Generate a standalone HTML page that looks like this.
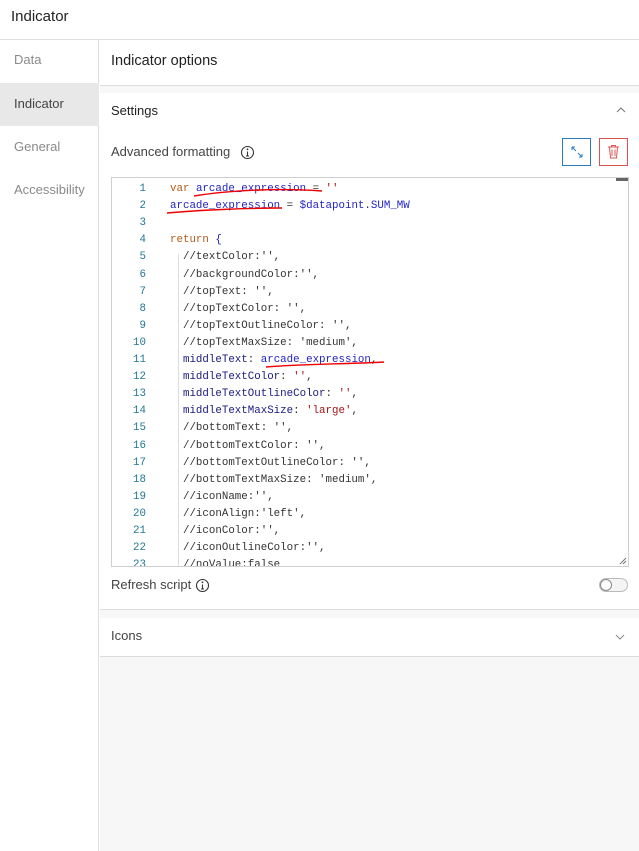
<!DOCTYPE html>
<html><head><meta charset="utf-8"><style>
*{box-sizing:border-box;margin:0;padding:0}
body{width:639px;height:851px;overflow:hidden;background:#fff;font-family:"Liberation Sans",sans-serif;color:#323232;position:relative}
.a{position:absolute}
.t{font-size:14px}
.code{position:absolute;left:111px;top:177px;width:518px;height:390px;border:1px solid #cfcfcf;background:#fff;overflow:hidden}
.ln{position:absolute;left:0;width:34px;text-align:right;color:#237893;font:10.8px "Liberation Mono",monospace}
.cl{position:absolute;left:58px;white-space:pre;font:10.8px "Liberation Mono",monospace;color:#333}
.k{color:#af5a1b}.v{color:#1f1fc4}.p{color:#1a1a80}.s{color:#a31515}
</style></head><body>
<div class="a t" style="left:11px;top:8px;font-size:15px;color:#222">Indicator</div>
<div class="a" style="left:0;top:39px;width:639px;height:1px;background:#ddd"></div>
<div class="a" style="left:0;top:40px;width:99px;height:811px;background:#fff;border-right:1px solid #ddd"></div>
<div class="a" style="left:0;top:83px;width:99px;height:43px;background:#e8e8e8"></div>
<div class="a" style="left:14px;top:52px;font-size:13px;color:#8a8a8a">Data</div>
<div class="a" style="left:14px;top:96px;font-size:13px;color:#444">Indicator</div>
<div class="a" style="left:14px;top:139px;font-size:13px;color:#8a8a8a">General</div>
<div class="a" style="left:14px;top:182px;font-size:13px;color:#8a8a8a">Accessibility</div>
<div class="a" style="left:100px;top:40px;width:539px;height:811px;background:#f7f7f7"></div>
<div class="a" style="left:100px;top:40px;width:539px;height:46px;background:#fff;border-bottom:1px solid #ddd"></div>
<div class="a t" style="left:111px;top:53px;font-size:14.5px;color:#222">Indicator options</div>
<div class="a" style="left:100px;top:93px;width:539px;height:517px;background:#fff;border-bottom:1px solid #ddd"></div>
<div class="a" style="left:111px;top:103px;font-size:13px;color:#222">Settings</div>
<svg class="a" style="left:616px;top:106px" width="10" height="8"><path d="M1 6L5 2L9 6" fill="none" stroke="#777" stroke-width="1"/></svg>
<div class="a" style="left:111px;top:144px;font-size:13px;color:#444">Advanced formatting</div>
<svg class="a" style="left:240px;top:145px" width="15" height="15"><circle cx="7.5" cy="7.5" r="6" fill="none" stroke="#333" stroke-width="1.1"/><path d="M7.5 6.5v4.5M6 11h3" stroke="#333" stroke-width="1.1"/><circle cx="7.5" cy="4.3" r=".9" fill="#333"/></svg>
<div class="a" style="left:562px;top:138px;width:29px;height:28px;border:1px solid #2a7ac0"></div>
<svg class="a" style="left:570px;top:145px" width="14" height="14"><path d="M2 2l4 4M2 2v3M2 2h3M12 12L8 8M12 12V9M12 12H9" fill="none" stroke="#2a7ac0" stroke-width="1"/></svg>
<div class="a" style="left:599px;top:138px;width:29px;height:28px;border:1px solid #d9534f"></div>
<svg class="a" style="left:606px;top:144px" width="15" height="16"><path d="M2 3h11M5.5 3V1.5h4V3M3.5 3l1 11h6l1-11M6 5.5v6.5M9 5.5v6.5" fill="none" stroke="#d9534f" stroke-width="1"/></svg>
<div class="code">
<div class="a" style="right:0;top:0;width:12px;height:3px;background:#666"></div>
<div class="a" style="left:66px;top:76px;width:1px;height:320px;background:#ddd"></div>
<svg class="a" style="right:1px;bottom:1px" width="8" height="8"><path d="M7 1L1 7M7 4L4 7" stroke="#777"/></svg>
<div id="c"></div>
</div>
<svg class="a" style="left:0;top:0" width="639" height="851"><g fill="none" stroke="#e00" stroke-width="1.4"><path d="M194 196C230 190 280 188 322 191"/><path d="M167 213C200 210 250 208 282 208"/><path d="M266 367C300 364 350 364 384 362"/></g></svg>
<div class="a" style="left:111px;top:577px;font-size:13px;color:#444">Refresh script</div>
<svg class="a" style="left:195px;top:578px" width="15" height="15"><circle cx="7.5" cy="7.5" r="6" fill="none" stroke="#333" stroke-width="1.1"/><path d="M7.5 6.5v4.5M6 11h3" stroke="#333" stroke-width="1.1"/><circle cx="7.5" cy="4.3" r=".9" fill="#333"/></svg>
<div class="a" style="left:599px;top:578px;width:29px;height:14px;border:1px solid #bbb;border-radius:7px;background:#f4f4f4"></div>
<div class="a" style="left:600px;top:579px;width:12px;height:12px;border:1px solid #888;border-radius:50%;background:#fff"></div>
<div class="a" style="left:100px;top:618px;width:539px;height:39px;background:#fff;border-bottom:1px solid #ddd"></div>
<div class="a" style="left:111px;top:628px;font-size:13px;color:#444">Icons</div>
<svg class="a" style="left:615px;top:634px" width="10" height="6"><path d="M1 1L5 5L9 1" fill="none" stroke="#888"/></svg>
<script>
var L=[
'<span class="k">var</span> <span class="v">arcade_expression</span> = <span class="s">\'\'</span>',
'<span class="v">arcade_expression</span> = <span class="v">$datapoint</span>.<span class="v">SUM_MW</span>',
'',
'<span class="k">return</span> <span class="v">{</span>',
'  //textColor:\'\',','  //backgroundColor:\'\',','  //topText: \'\',','  //topTextColor: \'\',','  //topTextOutlineColor: \'\',','  //topTextMaxSize: \'medium\',',
'  <span class="p">middleText</span>: <span class="v">arcade_expression</span>,',
'  <span class="p">middleTextColor</span>: <span class="s">\'\'</span>,',
'  <span class="p">middleTextOutlineColor</span>: <span class="s">\'\'</span>,',
'  <span class="p">middleTextMaxSize</span>: <span class="s">\'large\'</span>,',
'  //bottomText: \'\',','  //bottomTextColor: \'\',','  //bottomTextOutlineColor: \'\',','  //bottomTextMaxSize: \'medium\',',
'  //iconName:\'\',','  //iconAlign:\'left\',','  //iconColor:\'\',','  //iconOutlineColor:\'\',','  //noValue:false'];
var h='';for(var i=0;i<L.length;i++){var y=5+i*17.1;h+='<div class="ln" style="top:'+y+'px">'+(i+1)+'</div><div class="cl" style="top:'+y+'px">'+L[i]+'</div>';}
document.getElementById('c').innerHTML=h;
</script>
</body></html>
